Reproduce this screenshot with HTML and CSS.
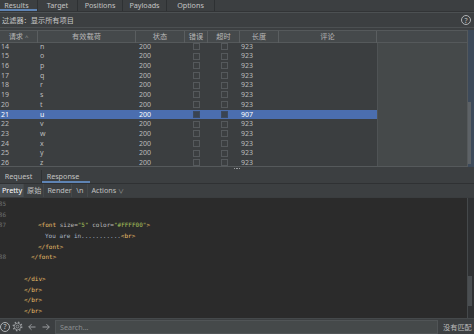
FILE: index.html
```html
<!DOCTYPE html>
<html>
<head>
<meta charset="utf-8">
<link rel="stylesheet" href="styles.css">
</head>
<body>
<div class="app">
  <div class="tabs">
    <div class="tab t-results active">Results</div>
    <div class="tab t-target">Target</div>
    <div class="tab t-positions">Positions</div>
    <div class="tab t-payloads">Payloads</div>
    <div class="tab t-options">Options</div>
  </div>
  <div class="filter">
    <span class="filter-text">过滤器：显示所有项目</span>
    <span class="help">?</span>
  </div>
  <div class="table-wrap">
    <div class="table">
      <div class="thead">
        <div class="th th-num">请求 <span class="caret">^</span></div>
        <div class="th">有效载荷</div>
        <div class="th">状态</div>
        <div class="th">错误</div>
        <div class="th">超时</div>
        <div class="th">长度</div>
        <div class="th">评论</div>
        <div class="th th-last"></div>
      </div>
      <div class="tbody">
        <div class="rows">
          <div class="row"><span class="c-num">14</span><span class="c-pay">n</span><span class="c-st">200</span><span class="c-cb"><i class="cb"></i></span><span class="c-cb"><i class="cb"></i></span><span class="c-len">923</span><span></span></div>
          <div class="row"><span class="c-num">15</span><span class="c-pay">o</span><span class="c-st">200</span><span class="c-cb"><i class="cb"></i></span><span class="c-cb"><i class="cb"></i></span><span class="c-len">923</span><span></span></div>
          <div class="row"><span class="c-num">16</span><span class="c-pay">p</span><span class="c-st">200</span><span class="c-cb"><i class="cb"></i></span><span class="c-cb"><i class="cb"></i></span><span class="c-len">923</span><span></span></div>
          <div class="row"><span class="c-num">17</span><span class="c-pay">q</span><span class="c-st">200</span><span class="c-cb"><i class="cb"></i></span><span class="c-cb"><i class="cb"></i></span><span class="c-len">923</span><span></span></div>
          <div class="row"><span class="c-num">18</span><span class="c-pay">r</span><span class="c-st">200</span><span class="c-cb"><i class="cb"></i></span><span class="c-cb"><i class="cb"></i></span><span class="c-len">923</span><span></span></div>
          <div class="row"><span class="c-num">19</span><span class="c-pay">s</span><span class="c-st">200</span><span class="c-cb"><i class="cb"></i></span><span class="c-cb"><i class="cb"></i></span><span class="c-len">923</span><span></span></div>
          <div class="row"><span class="c-num">20</span><span class="c-pay">t</span><span class="c-st">200</span><span class="c-cb"><i class="cb"></i></span><span class="c-cb"><i class="cb"></i></span><span class="c-len">923</span><span></span></div>
          <div class="row selected"><span class="c-num">21</span><span class="c-pay">u</span><span class="c-st">200</span><span class="c-cb"><i class="cb"></i></span><span class="c-cb"><i class="cb"></i></span><span class="c-len">907</span><span></span></div>
          <div class="row"><span class="c-num">22</span><span class="c-pay">v</span><span class="c-st">200</span><span class="c-cb"><i class="cb"></i></span><span class="c-cb"><i class="cb"></i></span><span class="c-len">923</span><span></span></div>
          <div class="row"><span class="c-num">23</span><span class="c-pay">w</span><span class="c-st">200</span><span class="c-cb"><i class="cb"></i></span><span class="c-cb"><i class="cb"></i></span><span class="c-len">923</span><span></span></div>
          <div class="row"><span class="c-num">24</span><span class="c-pay">x</span><span class="c-st">200</span><span class="c-cb"><i class="cb"></i></span><span class="c-cb"><i class="cb"></i></span><span class="c-len">923</span><span></span></div>
          <div class="row"><span class="c-num">25</span><span class="c-pay">y</span><span class="c-st">200</span><span class="c-cb"><i class="cb"></i></span><span class="c-cb"><i class="cb"></i></span><span class="c-len">923</span><span></span></div>
          <div class="row"><span class="c-num">26</span><span class="c-pay">z</span><span class="c-st">200</span><span class="c-cb"><i class="cb"></i></span><span class="c-cb"><i class="cb"></i></span><span class="c-len">923</span><span></span></div>
        </div>
        <div class="empty-col"></div>
      </div>
    </div>
    <div class="vscroll"><div class="vthumb"></div></div>
  </div>
  <div class="splitter"><i></i><i></i><i></i></div>
  <div class="rr-tabs">
    <div class="rr-tab">Request</div>
    <div class="rr-tab active">Response</div>
  </div>
  <div class="toolbar">
    <div class="tb-item pretty">Pretty</div>
    <div class="tb-item raw">原始</div>
    <div class="tb-item render">Render</div>
    <div class="tb-item nl">\n</div>
    <div class="tb-item actions">Actions <span class="chev">&#8744;</span></div>
  </div>
  <div class="editor">
    <div class="code">
      <div class="ln"><span class="num">85</span><span class="src"></span></div>
      <div class="ln"><span class="num">86</span><span class="src"></span></div>
      <div class="ln"><span class="num">87</span><span class="src i4"><span class="tag">&lt;font</span> <span class="attr">size=</span><span class="val">"5"</span> <span class="attr">color=</span><span class="val">"#FFFF00"</span><span class="tag">&gt;</span></span></div>
      <div class="ln"><span class="num"></span><span class="src i5"><span class="txt">You are in...........</span><span class="tag">&lt;br&gt;</span></span></div>
      <div class="ln"><span class="num"></span><span class="src i4"><span class="tag">&lt;/font&gt;</span></span></div>
      <div class="ln"><span class="num">88</span><span class="src i3"><span class="tag">&lt;/font&gt;</span></span></div>
      <div class="ln"><span class="num"></span><span class="src"></span></div>
      <div class="ln"><span class="num"></span><span class="src i2"><span class="tag">&lt;/div&gt;</span></span></div>
      <div class="ln"><span class="num"></span><span class="src i2"><span class="tag">&lt;/br&gt;</span></span></div>
      <div class="ln"><span class="num"></span><span class="src i2"><span class="tag">&lt;/br&gt;</span></span></div>
      <div class="ln"><span class="num"></span><span class="src i2"><span class="tag">&lt;/br&gt;</span></span></div>
    </div>
    <div class="escroll"><div class="ethumb"></div></div>
  </div>
  <div class="statusbar">
    <span class="help sb-help">?</span>
    <svg class="icon gear" width="11" height="11" viewBox="0 0 11 11"><circle cx="5.5" cy="5.5" r="4.2" fill="none" stroke="#9a9da0" stroke-width="1.5" stroke-dasharray="1.45 1.85"/><circle cx="5.5" cy="5.5" r="3.3" fill="none" stroke="#9a9da0" stroke-width="0.8"/><circle cx="5.5" cy="5.5" r="1.4" fill="none" stroke="#9a9da0" stroke-width="0.8"/></svg>
    <svg class="icon arrow" width="10" height="10" viewBox="0 0 10 10"><path d="M8.5 5H1.8M4.5 2.2L1.7 5l2.8 2.8" fill="none" stroke="#9a9da0" stroke-width="1"/></svg>
    <svg class="icon arrow" width="10" height="10" viewBox="0 0 10 10"><path d="M1.5 5h6.7M5.5 2.2L8.3 5 5.5 7.8" fill="none" stroke="#9a9da0" stroke-width="1"/></svg>
    <div class="search">Search...</div>
    <div class="nomatch">没有匹配</div>
  </div>
</div>
</body>
</html>
```

FILE: styles.css
```css
* { box-sizing: border-box; margin: 0; padding: 0; }
html, body { width: 474px; height: 334px; overflow: hidden; background: #3c3f41; }
body {
  font-family: "Noto Sans", "Noto Sans CJK SC", sans-serif;
  font-size: 7.2px;
  color: #bbbbbb;
}
.app { display: flex; flex-direction: column; height: 334px; }

/* top tabs */
.tabs { height: 12px; display: flex; flex: none; border-bottom: 1px solid #323436; }
.tab { line-height: 11px; text-align: center; border-right: 1px solid #2e3133; color: #c4c4c4; }
.t-results { width: 38px; padding-right: 4px; }
.t-target { width: 40px; }
.t-positions { width: 45px; }
.t-payloads { width: 44px; }
.t-options { width: 48px; }
.tab.active { box-shadow: inset 0 -2px 0 #5f84b4; }

/* filter */
.filter {
  height: 16px; flex: none; display: flex; align-items: center; justify-content: space-between;
  border-top: 1px solid #4c5052; border-bottom: 1px solid #4c5052;
  padding: 0 3px 0 2px;
}
.filter-text { color: #c8c8c8; }
.help {
  width: 10px; height: 10px; border: 1px solid #b0b3b5; border-radius: 50%;
  display: flex; align-items: center; justify-content: center;
  font-size: 7px; line-height: 1; color: #c0c0c0; flex: none;
}

/* table */
.table-wrap { margin-top: 2px; height: 137px; flex: none; display: flex; }
.table { width: 467px; display: flex; flex-direction: column; }
.thead {
  height: 13px; flex: none; display: grid;
  grid-template-columns: 38px 98px 49px 23px 32px 39px 98px 1fr;
  background: #45494b; border-top: 1px solid #55595b; border-bottom: 1px solid #55595b;
}
.th { text-align: center; line-height: 11px; border-right: 1px solid #5a5e60; color: #b8b8b8; }
.th-num .caret { font-size: 6px; color: #999; }
.th-last { border-right: none; }
.tbody { flex: 1; display: flex; overflow: hidden; border-bottom: 1px solid #55595b; }
.rows { width: 377px; background: #3b3e40; }
.rows .row:first-child { margin-top: -1.5px; }
.row {
  height: 9.72px; display: grid;
  grid-template-columns: 38px 98px 49px 23px 32px 39px 98px;
  line-height: 9.72px; color: #bcbcbc; font-size: 7px;
}
.row.selected { background: #4b6eaf; color: #ffffff; }
.c-num { padding-left: 1px; }
.c-pay { padding-left: 2px; }
.c-st { padding-left: 3px; }
.c-len { padding-left: 1px; }
.c-cb { display: flex; align-items: center; justify-content: center; }
.cb { display: block; width: 7px; height: 7px; border: 1px solid #55595c; background: #3c3f41; }
.row.selected .cb { border-color: #3b4a60; background: #3a4452; }
.empty-col { flex: 1; background: #45494a; border-left: 1px solid #4f5355; }
.vscroll { width: 7px; background: #3d4a5a; border-left: 1px solid #55595b; position: relative; }
.vthumb { position: absolute; left: 0; top: 72px; width: 3px; height: 62px; background: #5d6266; }

/* splitter */
.splitter { height: 3px; flex: none; display: flex; justify-content: center; align-items: center; gap: 1px; }
.splitter i { display: block; width: 1.5px; height: 1.5px; background: #9a9da0; }

/* request / response */
.rr-tabs { height: 14px; flex: none; display: flex; border-bottom: 1px solid #2f3133; }
.rr-tab { line-height: 13px; text-align: center; color: #c4c4c4; }
.rr-tab:first-child { width: 42px; padding-right: 4px; border-right: 1px solid #2e3133; }
.rr-tab.active { width: 48px; box-shadow: inset 0 -2px 0 #5f84b4; padding-right: 6px; }

/* toolbar */
.toolbar { height: 13px; flex: none; display: flex; align-items: stretch; }
.tb-item { line-height: 13px; padding: 0 3px; border-right: 1px solid #45494b; color: #c0c0c0; white-space: nowrap; flex: none; }
.tb-item.pretty { background: #4a4f53; color: #ffffff; padding: 0 2px; width: 24px; }
.tb-item.raw { padding: 0 2px 0 3px; font-family: "Noto Sans CJK SC", sans-serif; }
.tb-item.render { padding: 0 3px 0 3px; width: 28px; }
.tb-item.nl { width: 16px; text-align: center; }
.tb-item.actions { border-right: none; }
.chev { font-size: 6px; color: #999; }

/* editor */
.editor { flex: 1; display: flex; background: #2b2b2b; min-height: 0; border-top: 1px solid #3a3d3f; }
.code { flex: 1; padding-top: 1px; font-family: "DejaVu Sans Mono", "Liberation Mono", monospace; font-size: 6px; overflow: hidden; }
.ln { height: 10.7px; line-height: 10.7px; display: flex; white-space: pre; }
.num { width: 6px; flex: none; direction: rtl; text-align: right; color: #6e7275; }
.src { padding-left: 4px; }
.i2 { padding-left: 18px; }
.i3 { padding-left: 25px; }
.i4 { padding-left: 32px; }
.i5 { padding-left: 39px; }
.tag { color: #e8bf6a; }
.attr { color: #bababa; }
.val { color: #a5c25c; }
.txt { color: #a9b7c6; }
.escroll { width: 7px; flex: none; background: #2f3133; border-left: 1px solid #45494b; position: relative; }
.ethumb { position: absolute; left: 0; top: 78px; width: 4px; height: 30px; background: #4a4e51; }

/* status bar */
.statusbar { height: 16px; flex: none; display: flex; align-items: center; border-top: 1px solid #45494b; }
.icon { display: block; flex: none; }
.gear { margin-left: 2px; }
.arrow { margin-left: 4px; }
.search {
  margin-left: 4px; width: 383px; height: 14px; background: #45494a;
  border: 1px solid #505456; padding-left: 4px; line-height: 12px; color: #8c8f91;
}
.nomatch { margin-left: 5px; color: #bdbdbd; white-space: nowrap; }
```
